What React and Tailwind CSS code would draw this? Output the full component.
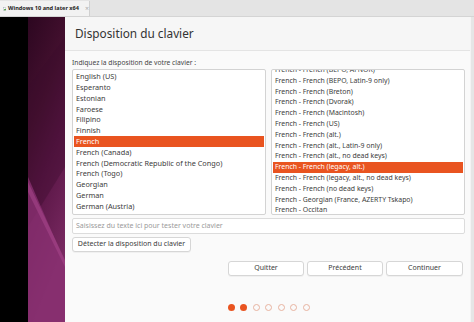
import React from "react";

const leftItems = [
  "English (UK)",
  "English (US)",
  "Esperanto",
  "Estonian",
  "Faroese",
  "Filipino",
  "Finnish",
  "French",
  "French (Canada)",
  "French (Democratic Republic of the Congo)",
  "French (Togo)",
  "Georgian",
  "German",
  "German (Austria)",
  "German (Switzerland)",
];

const rightItems = [
  "French - French (BEPO, AFNOR)",
  "French - French (BEPO, Latin-9 only)",
  "French - French (Breton)",
  "French - French (Dvorak)",
  "French - French (Macintosh)",
  "French - French (US)",
  "French - French (alt.)",
  "French - French (alt., Latin-9 only)",
  "French - French (alt., no dead keys)",
  "French - French (legacy, alt.)",
  "French - French (legacy, alt., no dead keys)",
  "French - French (no dead keys)",
  "French - Georgian (France, AZERTY Tskapo)",
  "French - Occitan",
];

function List({ items, selected, offsetClass, textClass }) {
  return (
    <div className="h-[146px] flex-1 overflow-hidden rounded-[2px] border border-[#d3d3d3] bg-white px-[1px]">
      <div className={offsetClass}>
        {items.map((it) => (
          <div
            key={it}
            className={
              "flex h-[10.8px] items-center whitespace-nowrap pl-[2px] leading-none " +
              textClass +
              " " +
              (it === selected ? "bg-[#e95420] text-white" : "text-[#3c3c3c]")
            }
          >
            {it}
          </div>
        ))}
      </div>
    </div>
  );
}

function Btn({ children, className }) {
  return (
    <div
      className={
        "flex h-[15px] items-center justify-center rounded-[3px] border border-[#d6d6d6] bg-white text-[7px] text-[#3c3c3c] shadow-[0_1px_0_rgba(0,0,0,0.04)] " +
        className
      }
    >
      {children}
    </div>
  );
}

export default function App() {
  return (
    <div
      className="flex h-[322px] w-[474px] flex-col overflow-hidden bg-[#e6e6e6]"
      style={{ fontFamily: '"Noto Sans", "Open Sans", sans-serif' }}
    >
      {/* Tab bar */}
      <div className="flex h-[17px] items-end border-b border-[#d4d4d4] bg-[#e4e4e4] pt-[2px]">
        <div className="flex h-[15px] w-[90px] items-center gap-[2px] border-r border-[#d0d0d0] bg-[#f2f2f2] pl-[3px]">
          <svg width="8" height="8" viewBox="0 0 8 8">
            <rect x="0.5" y="0.5" width="6" height="7" fill="#fff" stroke="#7a8a99" strokeWidth="0.8" />
            <rect x="3" y="4" width="4.5" height="3.5" fill="#4a9a3a" />
          </svg>
          <span className="text-[5.6px] font-bold whitespace-nowrap text-[#222]">
            Windows 10 and later x64
          </span>
          <span className="ml-[4px] text-[7px] leading-none text-[#aaa]">×</span>
        </div>
      </div>

      {/* Main area */}
      <div className="flex flex-1">
        <div className="w-[28px] bg-black" />
        <div className="w-[37px]">
          <svg width="37" height="305" viewBox="0 0 37 305" preserveAspectRatio="none">
            <defs>
              <linearGradient id="wp" x1="0" y1="0" x2="0.3" y2="1">
                <stop offset="0" stopColor="#2c0720" />
                <stop offset="0.35" stopColor="#44102f" />
                <stop offset="0.6" stopColor="#5a1646" />
                <stop offset="1" stopColor="#7a2a62" />
              </linearGradient>
            </defs>
            <rect width="37" height="305" fill="url(#wp)" />
            <polygon points="0,70 37,20 37,150 0,210" fill="#3a0c2a" opacity="0.35" />
            <polygon points="0,160 37,245 37,305 0,305" fill="#8c3174" opacity="0.75" />
            <polygon points="0,165 37,243 37,250 0,175" fill="#a54488" opacity="0.6" />
          </svg>
        </div>

        {/* Dialog */}
        <div className="flex w-[405px] flex-col bg-[#fafafa]">
          <div className="flex h-[34px] items-center border-b border-[#e4e4e4] bg-[#f6f6f6] pl-[10px]">
            <span className="text-[11.8px] text-[#333]">Disposition du clavier</span>
          </div>
          <div className="flex flex-1 flex-col pl-[7px] pr-[5px]">
            <div className="mt-[7px] h-[10px] whitespace-nowrap text-[6.7px] leading-[10px] text-[#444]">
              Indiquez la disposition de votre clavier :
            </div>
            <div className="mt-[1px] flex gap-[5px]">
              <List items={leftItems} selected="French" offsetClass="-mt-[9.4px]" textClass="text-[7.3px]" />
              <List
                items={rightItems}
                selected="French - French (legacy, alt.)"
                offsetClass="-mt-[5px]"
                textClass="text-[6.9px]"
              />
            </div>
            <div className="mt-[3px] flex h-[16px] items-center rounded-[2px] border border-[#dcdcdc] bg-white pl-[3px] text-[7px] text-[#9a9a9a]">
              Saisissez du texte ici pour tester votre clavier
            </div>
            <Btn className="mt-[3px] w-[119px]">Détecter la disposition du clavier</Btn>
            <div className="mt-[9px] flex justify-end gap-[3px] pr-[2px]">
              <Btn className="w-[76px]">Quitter</Btn>
              <Btn className="w-[76px]">Précédent</Btn>
              <Btn className="w-[77px]">Continuer</Btn>
            </div>
            <div className="mt-[28px] flex justify-center gap-[5.5px]">
              {[0, 1, 2, 3, 4, 5, 6].map((i) => (
                <div
                  key={i}
                  className={
                    "h-[7px] w-[7px] rounded-full " +
                    (i < 2 ? "bg-[#e95420]" : "border border-[#e8b3a0] bg-transparent")
                  }
                />
              ))}
            </div>
          </div>
        </div>
        <div className="flex-1 border-l border-[#f4f4f4] bg-[#e6e6e6]" />
      </div>
    </div>
  );
}
